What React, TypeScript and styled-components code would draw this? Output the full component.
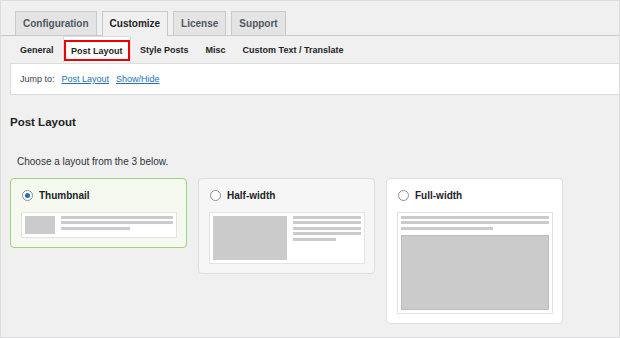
import React from "react";
import styled, { createGlobalStyle } from "styled-components";

const Global = createGlobalStyle`
  html, body { margin: 0; padding: 0; background: #f0f0f0; }
  body { font-family: "Liberation Sans", Arial, sans-serif; }
  * { box-sizing: border-box; }
`;

const Page = styled.div`
  width: 620px;
  height: 338px;
  border: 1px solid #dcdcde;
  background: #f0f0f0;
  overflow: hidden;
  display: flex;
  flex-direction: column;
`;

const TabBar = styled.div`
  display: flex;
  gap: 5px;
  padding: 10px 0 0 14px;
  border-bottom: 1px solid #c9c9c9;
  height: 35px;
  flex-shrink: 0;
`;

const Tab = styled.div<{ $active?: boolean }>`
  height: ${(p) => (p.$active ? "25px" : "24px")};
  margin-bottom: ${(p) => (p.$active ? "-1px" : "0")};
  padding: 0 7px;
  border: 1px solid #c9c9c9;
  border-bottom: none;
  background: ${(p) => (p.$active ? "#f0f0f0" : "#e4e4e4")};
  color: ${(p) => (p.$active ? "#1d2327" : "#50575e")};
  font-size: 10px;
  font-weight: 700;
  line-height: 23px;
  white-space: nowrap;
  position: relative;
`;

const SubNav = styled.div`
  display: flex;
  gap: 1px;
  padding-left: 11px;
  height: 27px;
  align-items: stretch;
  flex-shrink: 0;
`;

const SubTab = styled.div<{ $active?: boolean }>`
  padding: ${(p) => (p.$active ? "3px 0 0" : "0 8px")};
  font-size: 9px;
  font-weight: 700;
  color: #1d2327;
  white-space: nowrap;
  display: flex;
  align-items: ${(p) => (p.$active ? "flex-start" : "center")};
  background: ${(p) => (p.$active ? "#fff" : "transparent")};
  border: ${(p) => (p.$active ? "1px solid #dcdcde" : "none")};
  border-bottom: none;
  position: relative;
  z-index: 1;
`;

const Highlight = styled.span`
  display: flex;
  align-items: center;
  height: 21px;
  padding: 0 5.5px;
  border: 2px solid #ee0000;
`;

const JumpBox = styled.div`
  margin-left: 9px;
  height: 32px;
  flex-shrink: 0;
  background: #fff;
  border: 1px solid #dcdcde;
  border-right: none;
  display: flex;
  align-items: center;
  gap: 7px;
  padding-left: 9px;
  font-size: 9px;
  color: #3c434a;
`;

const JumpLink = styled.a`
  color: #2271b1;
  text-decoration: underline;
  cursor: pointer;
`;

const Content = styled.div`
  padding-left: 9px;
  display: flex;
  flex-direction: column;
`;

const Heading = styled.h2`
  margin: 20px 0 0;
  font-size: 11.5px;
  line-height: 14px;
  font-weight: 700;
  color: #1d2327;
`;

const Description = styled.p`
  margin: 27px 0 0 7px;
  font-size: 10px;
  line-height: 12px;
  color: #2c3338;
`;

const Cards = styled.div`
  margin-top: 10px;
  display: flex;
  gap: 11px;
  align-items: flex-start;
`;

type Variant = "selected" | "muted" | "plain";

const Card = styled.label<{ $variant: Variant }>`
  width: 177px;
  padding: 10px 9px 9px 10px;
  border-radius: 4px;
  border: 1px solid
    ${(p) => (p.$variant === "selected" ? "#9ed57a" : "#dedede")};
  background: ${(p) =>
    p.$variant === "selected"
      ? "#f5f9f0"
      : p.$variant === "muted"
      ? "#f6f6f6"
      : "#ffffff"};
  display: flex;
  flex-direction: column;
  gap: 10px;
`;

const RadioRow = styled.div`
  display: flex;
  align-items: center;
  gap: 6px;
  height: 13px;
  padding-left: 1px;
  font-size: 10px;
  font-weight: 700;
  color: #1d2327;
`;

const Radio = styled.span<{ $checked?: boolean }>`
  width: 11px;
  height: 11px;
  border-radius: 50%;
  border: 1px solid #8c8f94;
  background: #fff;
  display: flex;
  align-items: center;
  justify-content: center;
  &::after {
    content: "";
    width: 5px;
    height: 5px;
    border-radius: 50%;
    background: ${(p) => (p.$checked ? "#2271b1" : "transparent")};
  }
`;

const Preview = styled.div<{ $dir: "row" | "column" }>`
  background: #fff;
  border: 1px solid #e3e3e3;
  padding: 3px;
  display: flex;
  flex-direction: ${(p) => p.$dir};
  gap: ${(p) => (p.$dir === "row" ? "6px" : "5.5px")};
`;

const ImageBlock = styled.div<{ $w?: string; $h: number }>`
  width: ${(p) => p.$w ?? "auto"};
  height: ${(p) => p.$h}px;
  background: #cbcbcb;
  flex-shrink: 0;
`;

const FullImage = styled(ImageBlock)`
  border: 1px solid #bdbdbd;
`;

const Lines = styled.div`
  flex: 1;
  display: flex;
  flex-direction: column;
  gap: 2.65px;
`;

const Line = styled.div<{ $short?: number }>`
  height: 2.8px;
  background: #cbcbcb;
  width: ${(p) => (p.$short ? `${p.$short}%` : "100%")};
`;

export default function App() {
  return (
    <>
      <Global />
      <Page>
        <TabBar>
          <Tab>Configuration</Tab>
          <Tab $active>Customize</Tab>
          <Tab>License</Tab>
          <Tab>Support</Tab>
        </TabBar>
        <SubNav>
          <SubTab>General</SubTab>
          <SubTab $active>
            <Highlight>Post Layout</Highlight>
          </SubTab>
          <SubTab>Style Posts</SubTab>
          <SubTab>Misc</SubTab>
          <SubTab>Custom Text / Translate</SubTab>
        </SubNav>
        <JumpBox>
          <span>Jump to:</span>
          <JumpLink>Post Layout</JumpLink>
          <JumpLink>Show/Hide</JumpLink>
        </JumpBox>
        <Content>
          <Heading>Post Layout</Heading>
          <Description>Choose a layout from the 3 below.</Description>
          <Cards>
            <Card $variant="selected">
              <RadioRow>
                <Radio $checked />
                Thumbnail
              </RadioRow>
              <Preview $dir="row">
                <ImageBlock $w="30px" $h={18} />
                <Lines>
                  <Line />
                  <Line />
                  <Line $short={62} />
                </Lines>
              </Preview>
            </Card>
            <Card $variant="muted">
              <RadioRow>
                <Radio />
                Half-width
              </RadioRow>
              <Preview $dir="row">
                <ImageBlock $w="74px" $h={44} />
                <Lines>
                  <Line />
                  <Line />
                  <Line />
                  <Line />
                  <Line $short={63} />
                </Lines>
              </Preview>
            </Card>
            <Card $variant="plain">
              <RadioRow>
                <Radio />
                Full-width
              </RadioRow>
              <Preview $dir="column">
                <Lines>
                  <Line />
                  <Line />
                  <Line $short={62} />
                </Lines>
                <FullImage $h={75} />
              </Preview>
            </Card>
          </Cards>
        </Content>
      </Page>
    </>
  );
}
